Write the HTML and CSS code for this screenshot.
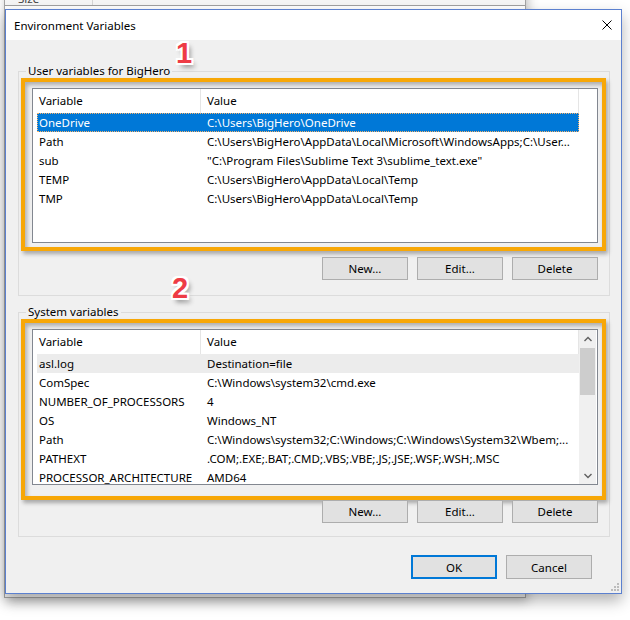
FILE: index.html
```html
<!DOCTYPE html>
<html lang="en">
<head>
    <meta charset="UTF-8">
    <title>Environment Variables</title>
    <link rel="stylesheet" href="styles.css">
</head>
<body>
    <div class="back-window">
        <div class="back-header"><div class="back-col">Size</div></div>
        <div class="back-list"></div>
    </div>

    <div class="dialog">
        <div class="titlebar">
            <span class="title">Environment Variables</span>
            <svg class="close" width="10" height="10" viewBox="0 0 10 10">
                <path d="M0.5 0.5 L9.5 9.5 M9.5 0.5 L0.5 9.5" stroke="#000" stroke-width="1" fill="none"/>
            </svg>
        </div>
        <div class="dialog-body">
            <fieldset class="group">
                <legend>User variables for BigHero</legend>
                <div class="callout">
                    <div class="listview">
                        <div class="lv-main">
                            <div class="lv-header">
                                <div class="col-name">Variable</div>
                                <div class="col-value">Value</div>
                            </div>
                            <div class="row selected"><span class="name">OneDrive</span><span class="value">C:\Users\BigHero\OneDrive</span></div>
                            <div class="row"><span class="name">Path</span><span class="value">C:\Users\BigHero\AppData\Local\Microsoft\WindowsApps;C:\User...</span></div>
                            <div class="row"><span class="name">sub</span><span class="value">"C:\Program Files\Sublime Text 3\sublime_text.exe"</span></div>
                            <div class="row"><span class="name">TEMP</span><span class="value">C:\Users\BigHero\AppData\Local\Temp</span></div>
                            <div class="row"><span class="name">TMP</span><span class="value">C:\Users\BigHero\AppData\Local\Temp</span></div>
                        </div>
                    </div>
                </div>
                <div class="buttons">
                    <button>New...</button>
                    <button>Edit...</button>
                    <button>Delete</button>
                </div>
            </fieldset>

            <fieldset class="group group-system">
                <legend>System variables</legend>
                <div class="callout">
                    <div class="listview">
                        <div class="lv-main">
                            <div class="lv-header">
                                <div class="col-name">Variable</div>
                                <div class="col-value">Value</div>
                            </div>
                            <div class="row inactive"><span class="name">asl.log</span><span class="value">Destination=file</span></div>
                            <div class="row"><span class="name">ComSpec</span><span class="value">C:\Windows\system32\cmd.exe</span></div>
                            <div class="row"><span class="name">NUMBER_OF_PROCESSORS</span><span class="value">4</span></div>
                            <div class="row"><span class="name">OS</span><span class="value">Windows_NT</span></div>
                            <div class="row"><span class="name">Path</span><span class="value">C:\Windows\system32;C:\Windows;C:\Windows\System32\Wbem;...</span></div>
                            <div class="row"><span class="name">PATHEXT</span><span class="value">.COM;.EXE;.BAT;.CMD;.VBS;.VBE;.JS;.JSE;.WSF;.WSH;.MSC</span></div>
                            <div class="row"><span class="name">PROCESSOR_ARCHITECTURE</span><span class="value">AMD64</span></div>
                        </div>
                        <div class="scrollbar">
                            <div class="sb-arrow">
                                <svg width="8" height="6" viewBox="0 0 8 6"><path d="M0.5 5 L4 1.5 L7.5 5" stroke="#606060" stroke-width="1.4" fill="none"/></svg>
                            </div>
                            <div class="sb-thumb"></div>
                            <div class="sb-track"></div>
                            <div class="sb-arrow">
                                <svg width="8" height="6" viewBox="0 0 8 6"><path d="M0.5 1 L4 4.5 L7.5 1" stroke="#606060" stroke-width="1.4" fill="none"/></svg>
                            </div>
                        </div>
                    </div>
                </div>
                <div class="buttons">
                    <button>New...</button>
                    <button>Edit...</button>
                    <button>Delete</button>
                </div>
            </fieldset>

            <div class="dialog-buttons">
                <button class="default">OK</button>
                <button>Cancel</button>
            </div>
        </div>
        <svg class="grip" width="8" height="8" viewBox="0 0 8 8">
            <rect x="6" y="0" width="2" height="2" fill="#bcbcbc"/>
            <rect x="3" y="3" width="2" height="2" fill="#bcbcbc"/>
            <rect x="6" y="3" width="2" height="2" fill="#bcbcbc"/>
            <rect x="0" y="6" width="2" height="2" fill="#bcbcbc"/>
            <rect x="3" y="6" width="2" height="2" fill="#bcbcbc"/>
            <rect x="6" y="6" width="2" height="2" fill="#bcbcbc"/>
        </svg>
    </div>

    <span class="marker marker-1">1</span>
    <span class="marker marker-2">2</span>
</body>
</html>
```

FILE: styles.css
```css
* {
    box-sizing: border-box;
}
html, body {
    margin: 0;
}
body {
    width: 630px;
    height: 620px;
    position: relative;
    overflow: hidden;
    background: #fff;
    font-family: "Segoe UI", "Noto Sans", sans-serif;
    font-size: 11.5px;
    color: #000;
}

/* window peeking out from behind the dialog */
.back-window {
    position: absolute;
    left: 4px;
    top: -40px;
    width: 522px;
    height: 638px;
    background: #f0f0f0;
    border: 1px solid #a3a3a3;
    box-shadow: 2px 3px 10px rgba(0, 0, 0, 0.25);
}
.back-header {
    height: 45px;
    display: flex;
    background: #f5f5f5;
    border-bottom: 1px solid #a0a0a0;
}
.back-col {
    width: 88px;
    padding-left: 13px;
    display: flex;
    align-items: flex-end;
    line-height: 12px;
    color: #444;
    border-right: 1px solid #d5d5d5;
}
.back-list {
    height: 420px;
    background: #fff;
}

.dialog {
    position: absolute;
    left: 5px;
    top: 9px;
    width: 617px;
    height: 585px;
    background: #f0f0f0;
    border: 1px solid #5b80cf;
    box-shadow: 0 7px 14px rgba(0, 0, 0, 0.3);
}
.titlebar {
    height: 30px;
    background: #fff;
    display: flex;
    align-items: center;
    justify-content: space-between;
    padding: 0 9px 0 8px;
}
.dialog-body {
    padding: 24px 11px 0 12px;
}

.group {
    margin: 0;
    min-width: 0;
    padding: 0 3px 15px 2px;
    border: 1px solid #dcdcdc;
}
.group legend {
    margin-left: 5px;
    padding: 0 2px;
    line-height: 14px;
}
.group-system {
    margin-top: 9px;
    padding-bottom: 13px;
}

/* orange annotation frame */
.callout {
    border: 4px solid #f7a707;
    padding: 6px 4px 4px 7px;
    box-shadow: 2px 3px 4px rgba(0, 0, 0, 0.3), inset 2px 3px 4px rgba(0, 0, 0, 0.28);
}
.group-system .callout {
    padding-bottom: 11px;
}

.listview {
    height: 155px;
    display: flex;
    background: #fff;
    border: 1px solid #828790;
}
.group-system .listview {
    height: 156px;
}
.lv-main {
    width: 546px;
    overflow: hidden;
}
.lv-header {
    display: flex;
    height: 24px;
    line-height: 24px;
}
.lv-header div {
    padding-left: 6px;
    border-right: 1px solid #e5e5e5;
}
.col-name {
    width: 168px;
}
.col-value {
    width: 378px;
}
.row {
    display: flex;
    height: 19px;
    line-height: 19px;
    margin-left: 4px;
    white-space: nowrap;
}
.row .name {
    width: 168px;
    padding-left: 2px;
    overflow: hidden;
}
.row .value {
    flex: 1;
    padding-left: 2px;
    overflow: hidden;
}
.row.selected {
    background: #0078d7;
    color: #fff;
    outline: 1px dotted #f6b26b;
    outline-offset: -1px;
}
.row.inactive {
    background: #ececec;
}

.scrollbar {
    width: 17px;
    display: flex;
    flex-direction: column;
    align-items: center;
    background: #f0f0f0;
}
.sb-arrow {
    width: 17px;
    height: 17px;
    display: flex;
    align-items: center;
    justify-content: center;
}
.sb-thumb {
    width: 15px;
    height: 47px;
    margin-top: 1px;
    background: #cdcdcd;
}
.sb-track {
    flex: 1;
}

.buttons {
    display: flex;
    justify-content: flex-end;
    gap: 9px;
    margin-top: 6px;
    padding-right: 8px;
}
.group-system .buttons {
    margin-top: 0;
}
button {
    width: 86px;
    height: 23px;
    padding: 0;
    background: #e1e1e1;
    border: 1px solid #adadad;
    font: inherit;
    color: #000;
}
.dialog-buttons {
    display: flex;
    justify-content: flex-end;
    gap: 9px;
    margin-top: 18px;
    padding-right: 18px;
}
.dialog-buttons button {
    height: 24px;
}
button.default {
    border: 2px solid #0078d7;
}

.grip {
    position: absolute;
    right: 2px;
    bottom: 2px;
}

/* red numbered callouts */
.marker {
    position: absolute;
    font-family: "Liberation Sans", Arial, sans-serif;
    font-weight: bold;
    font-size: 29px;
    line-height: 29px;
    color: #ee3b45;
    text-shadow:
        2px 0 #fff, -2px 0 #fff, 0 2px #fff, 0 -2px #fff,
        2px 2px #fff, -2px -2px #fff, 2px -2px #fff, -2px 2px #fff,
        3px 4px 5px rgba(0, 0, 0, 0.45);
}
.marker-1 {
    left: 176px;
    top: 39px;
}
.marker-2 {
    left: 172px;
    top: 274px;
}
```
